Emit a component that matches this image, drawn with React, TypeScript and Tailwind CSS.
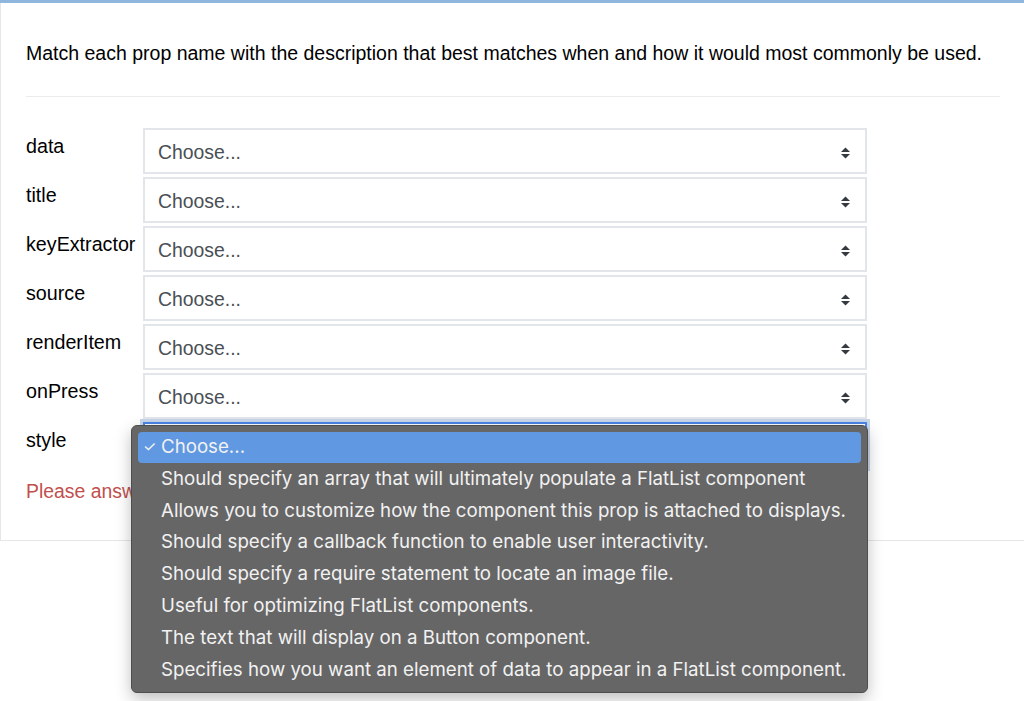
import React from "react";

const ROWS = ["data", "title", "keyExtractor", "source", "renderItem", "onPress", "style"];

const OPTIONS = [
  "Should specify an array that will ultimately populate a FlatList component",
  "Allows you to customize how the component this prop is attached to displays.",
  "Should specify a callback function to enable user interactivity.",
  "Should specify a require statement to locate an image file.",
  "Useful for optimizing FlatList components.",
  "The text that will display on a Button component.",
  "Specifies how you want an element of data to appear in a FlatList component.",
];

function Arrows() {
  return (
    <svg width="11" height="14" viewBox="0 0 11 14" className="text-[#343a40]">
      <path d="M1 6 L5.5 1.5 L10 6 Z" fill="currentColor" />
      <path d="M1 8 L5.5 12.5 L10 8 Z" fill="currentColor" />
    </svg>
  );
}

function FakeSelect({ focused }: { focused?: boolean }) {
  return (
    <div
      className={`flex h-[46px] w-[724px] items-center justify-between bg-white pl-[13px] pr-[14px] pt-[3px] ${
        focused ? "border-2 border-[#4a84e6] shadow-[0_0_0_3px_#c9d6ea]" : "border-2 border-[#e2e5e9]"
      }`}
    >
      <span className="text-[19.4px] text-[#4a4f55]">Choose...</span>
      <Arrows />
    </div>
  );
}

export default function App() {
  return (
    <div className="relative min-h-[701px] bg-white font-['Liberation_Sans',Arial,sans-serif] text-black">
      <div className="h-[3px] bg-[#8fb6dc]" />
      <div className="border-b border-l border-[#e6e6e6] pl-[25px] pr-[24px] pb-[37px]">
        <p className="pt-[37px] text-[19.5px] leading-[26px]">
          Match each prop name with the description that best matches when and how it would most commonly be used.
        </p>
        <div className="mt-[30px] h-px bg-[#ececec]" />
        <div className="mt-[31px] flex flex-col gap-[3px]">
          {ROWS.map((r, i) => (
            <div key={r} className="flex">
              <div className="w-[117px] pt-[6px] text-[19.7px] leading-[24px]">{r}</div>
              <FakeSelect focused={i === ROWS.length - 1} />
            </div>
          ))}
        </div>
        <p className="mt-[11px] text-[19.4px] leading-[24px] text-[#c0504d]">Please answer this question.</p>
      </div>

      {/* open native menu */}
      <div className="absolute left-[131px] top-[425px] w-[737px] rounded-[6px] border border-[#4e4e4e] bg-[#666666] px-[6px] py-[6px] shadow-[0_6px_16px_rgba(0,0,0,0.25)] font-['Inter','Liberation_Sans',sans-serif] text-[18.7px] text-[#f2f2f2]">
        <div className="flex h-[31px] items-center rounded-[4px] bg-[#6098e1] pl-[5px]">
          <span className="w-[18px] text-[15px]">✓</span>
          <span>Choose...</span>
        </div>
        {OPTIONS.map((o) => (
          <div key={o} className="flex h-[31.8px] items-center pl-[23px] whitespace-nowrap">
            {o}
          </div>
        ))}
      </div>
    </div>
  );
}
